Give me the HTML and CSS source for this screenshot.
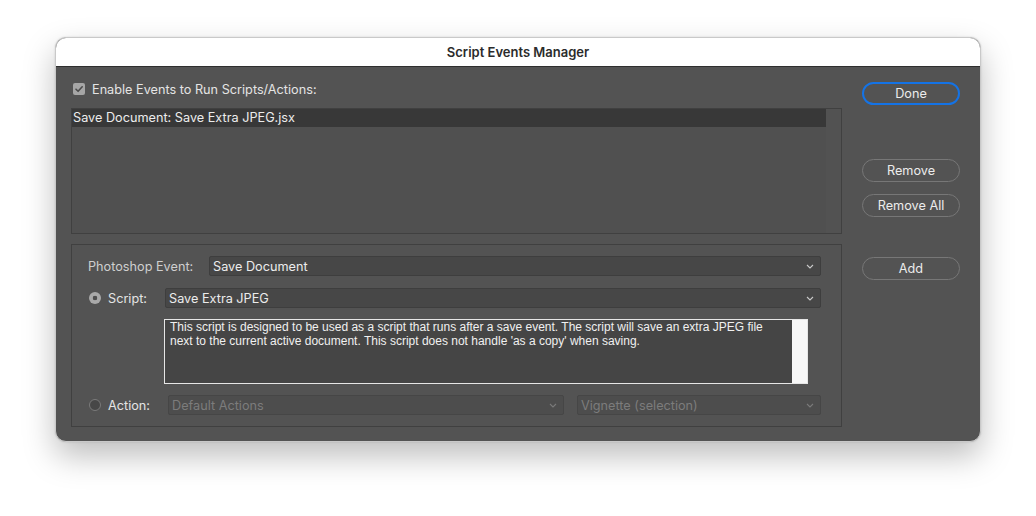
FILE: index.html
```html
<!DOCTYPE html>
<html>
<head>
<meta charset="utf-8">
<link rel="stylesheet" href="styles.css">
</head>
<body>
<div class="window">
  <div class="titlebar">Script Events Manager</div>
  <div class="content">
    <div class="main">
      <div class="enable-row">
        <span class="checkbox"><svg width="12" height="12" viewBox="0 0 12 12"><path d="M3 6.2 L5.1 8.3 L9.2 3.8" fill="none" stroke="#4b4b4b" stroke-width="1.6" stroke-linecap="round" stroke-linejoin="round"/></svg></span>
        <span class="label">Enable Events to Run Scripts/Actions:</span>
      </div>
      <div class="listbox">
        <div class="list-items">
          <div class="list-row selected">Save Document: Save Extra JPEG.jsx</div>
        </div>
        <div class="list-scroll"></div>
      </div>
      <div class="panel">
        <div class="row">
          <span class="row-label event-label">Photoshop Event:</span>
          <div class="select grow">
            <span class="select-text">Save Document</span>
            <svg class="chev" width="8" height="5" viewBox="0 0 8 5"><path d="M1 1 L4 4 L7 1" fill="none" stroke="#c8c8c8" stroke-width="1.1"/></svg>
          </div>
        </div>
        <div class="row script-row">
          <span class="row-label radio-label script-label"><span class="radio on"></span>Script:</span>
          <div class="select grow">
            <span class="select-text">Save Extra JPEG</span>
            <svg class="chev" width="8" height="5" viewBox="0 0 8 5"><path d="M1 1 L4 4 L7 1" fill="none" stroke="#c8c8c8" stroke-width="1.1"/></svg>
          </div>
        </div>
        <div class="desc">
          <div class="desc-text">This script is designed to be used as a script that runs after a save event. The script will save an extra JPEG file next to the current active document. This script does not handle 'as a copy' when saving.</div>
          <div class="desc-scroll"></div>
        </div>
        <div class="row action-row">
          <span class="row-label radio-label action-label"><span class="radio off"></span>Action:</span>
          <div class="select disabled set-select">
            <span class="select-text">Default Actions</span>
            <svg class="chev" width="8" height="5" viewBox="0 0 8 5"><path d="M1 1 L4 4 L7 1" fill="none" stroke="#7a7a7a" stroke-width="1.1"/></svg>
          </div>
          <div class="select disabled grow">
            <span class="select-text">Vignette (selection)</span>
            <svg class="chev" width="8" height="5" viewBox="0 0 8 5"><path d="M1 1 L4 4 L7 1" fill="none" stroke="#7a7a7a" stroke-width="1.1"/></svg>
          </div>
        </div>
      </div>
    </div>
    <div class="side">
      <button class="btn primary">Done</button>
      <button class="btn remove">Remove</button>
      <button class="btn remove-all">Remove All</button>
      <button class="btn add">Add</button>
    </div>
  </div>
</div>
</body>
</html>
```

FILE: styles.css
```css
html, body {
  margin: 0;
  padding: 0;
}
body {
  background: #ffffff;
  width: 1036px;
  height: 516px;
  overflow: hidden;
  padding: 37px 0 0 55px;
  box-sizing: border-box;
  font-family: Inter, "Noto Sans", sans-serif;
}
.window {
  width: 926px;
  height: 405px;
  border: 1px solid #c9c9c9;
  border-radius: 11px;
  background: #535353;
  overflow: hidden;
  box-sizing: border-box;
  box-shadow: 0 14px 32px rgba(0,0,0,0.26), 0 0 2px rgba(0,0,0,0.15);
  display: flex;
  flex-direction: column;
}
.titlebar {
  height: 28px;
  background: #ffffff;
  border-bottom: 1px solid #2e2e2e;
  display: flex;
  align-items: center;
  justify-content: center;
  font-size: 13px;
  font-weight: 600;
  color: #2b2b2b;
  flex: none;
}
.content {
  display: flex;
  padding: 0 20px 0 15px;
  flex: 1;
}
.main {
  width: 771px;
  display: flex;
  flex-direction: column;
}
.enable-row {
  margin-top: 12px;
  height: 20px;
  display: flex;
  align-items: center;
  padding-left: 2px;
}
.checkbox {
  width: 12px;
  height: 12px;
  border-radius: 2px;
  background: #a6a6a6;
  display: inline-flex;
  margin-right: 7px;
}
.label {
  font-size: 12.7px;
  color: #e4e4e4;
}
.listbox {
  margin-top: 9px;
  height: 126px;
  border: 1px solid #404040;
  box-sizing: border-box;
  background: #505050;
  display: flex;
}
.list-items {
  flex: 1;
}
.list-row {
  height: 18px;
  line-height: 18px;
  font-size: 12.7px;
  color: #ececec;
  padding-left: 1px;
}
.list-row.selected {
  background: #383838;
}
.list-scroll {
  width: 15px;
  background: #525252;
}
.panel {
  margin-top: 10px;
  height: 183px;
  border: 1px solid #404040;
  box-sizing: border-box;
  padding: 11px 20px 0 16px;
  display: flex;
  flex-direction: column;
}
.row {
  display: flex;
  align-items: center;
  height: 20px;
}
.script-row {
  margin-top: 12px;
}
.action-row {
  margin-top: 11px;
}
.row-label {
  font-size: 12.7px;
  color: #d6d6d6;
  flex: none;
  display: flex;
  align-items: center;
}
.event-label {
  width: 121px;
  color: #cfcfcf;
}
.script-label {
  width: 77px;
  color: #e4e4e4;
}
.action-label {
  width: 80px;
  color: #e4e4e4;
}
.radio {
  width: 12px;
  height: 12px;
  border-radius: 50%;
  box-sizing: border-box;
  margin-left: 1px;
  margin-right: 7px;
  flex: none;
}
.radio.on {
  background: radial-gradient(circle, #4e4e4e 0 2px, #a9a9a9 2.6px);
}
.radio.off {
  background: #474747;
  border: 1px solid #7a7a7a;
}
.select {
  height: 20px;
  box-sizing: border-box;
  border: 1px solid #3e3e3e;
  border-radius: 2px;
  background: #474747;
  display: flex;
  align-items: center;
  padding: 0 6px 0 3px;
}
.grow {
  flex: 1;
}
.select-text {
  flex: 1;
  font-size: 12.7px;
  color: #ececec;
}
.select.disabled {
  background: #4d4d4d;
  border-color: #464646;
}
.select.disabled .select-text {
  color: #7c7c7c;
}
.set-select {
  width: 396px;
  flex: none;
  margin-right: 13px;
}
.chev {
  flex: none;
}
.desc {
  margin: 11px 13px 0 76px;
  height: 65px;
  border: 1px solid #e6e6e6;
  box-sizing: border-box;
  display: flex;
  background: #454545;
}
.desc-text {
  flex: 1;
  font-family: "Liberation Sans", Arial, sans-serif;
  font-size: 12px;
  line-height: 14px;
  color: #f0f0f0;
  padding: 0 22px 0 5px;
}
.desc-scroll {
  width: 15px;
  background: #f7f7f7;
}
.side {
  margin-left: 20px;
  width: 98px;
  display: flex;
  flex-direction: column;
  padding-top: 15px;
}
.btn {
  height: 23px;
  border-radius: 12px;
  border: 1px solid #777777;
  background: #535353;
  color: #ececec;
  font-family: Inter, "Noto Sans", sans-serif;
  font-size: 12.7px;
  padding: 0;
  box-sizing: border-box;
}
.btn.primary {
  border: 2px solid #1473e6;
}
.btn.remove {
  margin-top: 54px;
}
.btn.remove-all {
  margin-top: 12px;
}
.btn.add {
  margin-top: 40px;
}
```
